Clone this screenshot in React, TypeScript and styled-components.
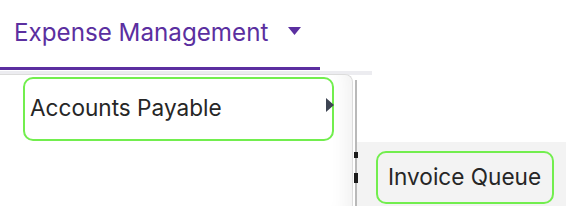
import React from "react";
import styled, { createGlobalStyle } from "styled-components";

const Global = createGlobalStyle`
  html, body { margin: 0; padding: 0; background: #ffffff; }
  body { font-family: Inter, "Liberation Sans", Arial, sans-serif; overflow: hidden; }
`;

const Page = styled.div`
  width: 566px;
  height: 206px;
  display: flex;
  flex-direction: column;
  overflow: hidden;
`;

const Tab = styled.div`
  width: 320px;
  height: 67px;
  box-sizing: content-box;
  border-bottom: 3px solid #5b2fa0;
  display: flex;
  align-items: flex-start;
`;

const TabLabel = styled.span`
  margin: 19px 0 0 14px;
  font-size: 24.2px;
  line-height: 28px;
  color: #5b2fa0;
  white-space: nowrap;
`;

const Caret = styled.svg`
  margin: 27px 0 0 20px;
  width: 13px;
  height: 8px;
  flex: none;
`;

const Strip = styled.div`
  margin-top: 1px;
  width: 372px;
  height: 4px;
  background: #ececf0;
`;

const MenuRow = styled.div`
  display: flex;
  flex: 1;
  align-items: stretch;
`;

const Panel = styled.div`
  width: 353px;
  box-sizing: border-box;
  padding: 2px 0 0 23px;
  background: #ffffff;
  border-top: 1px solid #dcdcdc;
  border-right: 1px solid #dcdcdc;
  border-top-right-radius: 8px;
  box-shadow: inset -22px 0 18px -16px rgba(0, 0, 0, 0.06);
  margin-top: -1px;
`;

const Item = styled.div<{ $w: number; $h: number }>`
  position: relative;
  width: ${(p) => p.$w}px;
  height: ${(p) => p.$h}px;
  box-sizing: border-box;
  border: 2px solid #72ee4e;
  border-radius: 10px;
  display: flex;
  align-items: center;
  padding-bottom: 3px;
  font-size: 22.6px;
  color: #262626;
  white-space: nowrap;
`;

const ItemText = styled.span<{ $pl: number }>`
  padding-left: ${(p) => p.$pl}px;
`;

const Arrow = styled.svg`
  position: absolute;
  right: -2px;
  top: 19px;
  width: 8px;
  height: 14px;
`;

const SubColumn = styled.div`
  margin-top: 5px;
  margin-left: 2px;
  flex: 1;
  display: flex;
  flex-direction: column;
  border-left: 2px solid #b9b9b9;
  position: relative;
`;

const Mark = styled.div<{ $top: number; $h: number }>`
  position: absolute;
  left: -3px;
  top: ${(p) => p.$top}px;
  width: 4px;
  height: ${(p) => p.$h}px;
  background: #1c1c1c;
`;

const SubSpacer = styled.div`
  height: 62px;
`;

const SubPanel = styled.div`
  flex: 1;
  background: #f3f3f3;
  padding: 9px 0 0 19px;
`;

export default function App() {
  return (
    <Page>
      <Global />
      <Tab>
        <TabLabel>Expense Management</TabLabel>
        <Caret viewBox="0 0 13 8">
          <path d="M0 0 H13 L6.5 8 Z" fill="#5b2fa0" />
        </Caret>
      </Tab>
      <Strip />
      <MenuRow>
        <Panel>
          <Item $w={311} $h={64}>
            <ItemText $pl={5}>Accounts Payable</ItemText>
            <Arrow viewBox="0 0 8 14">
              <path d="M0 0 L8 7 L0 14 Z" fill="#3d4452" />
            </Arrow>
          </Item>
        </Panel>
        <SubColumn>
          <Mark $top={72} $h={6} />
          <Mark $top={93} $h={10} />
          <SubSpacer />
          <SubPanel>
            <Item $w={178} $h={53}>
              <ItemText $pl={10}>Invoice Queue</ItemText>
            </Item>
          </SubPanel>
        </SubColumn>
      </MenuRow>
    </Page>
  );
}
